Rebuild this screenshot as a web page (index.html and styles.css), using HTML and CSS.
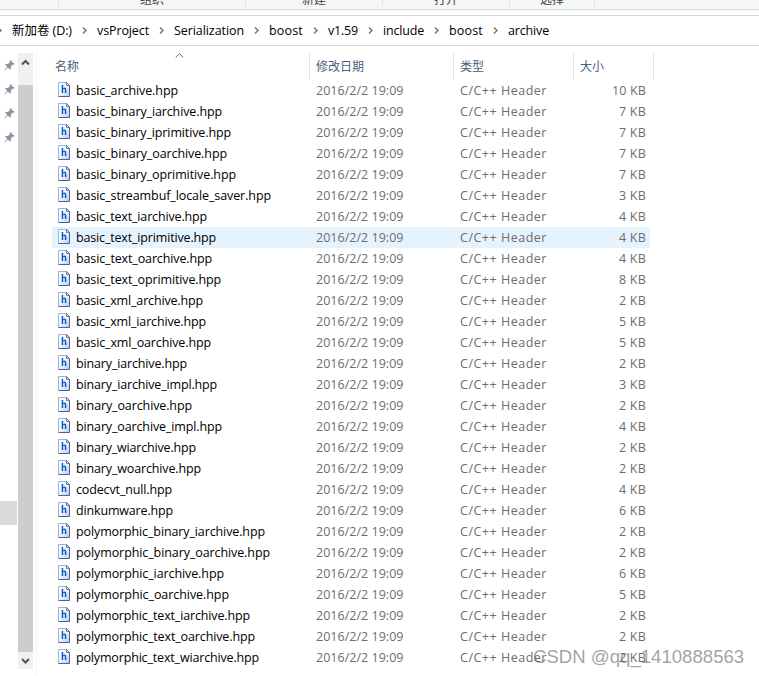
FILE: index.html
```html
<!DOCTYPE html>
<html lang="zh-CN">
<head>
<meta charset="utf-8">
<title>archive</title>
<link rel="stylesheet" href="styles.css">
</head>
<body>
<svg class="defs" aria-hidden="true">
  <defs>
    <linearGradient id="paper" x1="0" y1="0" x2="1" y2="1"><stop offset="0" stop-color="#fff"/><stop offset=".5" stop-color="#f0f5fe"/><stop offset="1" stop-color="#b4c9ea"/></linearGradient>
  </defs>
  <symbol id="file" viewBox="0 0 12 15">
    <path d="M.5.5H8.5L11.5 3.5V14.5H.5Z" fill="url(#paper)"/>
    <path d="M.5 14.5V.5H8.5" fill="none" stroke="#9fb3d3"/>
    <path d="M8.5 .5L11.5 3.5V14.5H.5" fill="none" stroke="#4a6294"/>
    <path d="M8.5 .5V3.5H11.5Z" fill="#dbe6f5" stroke="#3c568a" stroke-width=".7"/>
    <path d="M3.7 3H5.2V6.2Q5.8 5.6 6.6 5.6Q8.3 5.6 8.3 7.5V11H6.8V7.8Q6.8 6.8 6.1 6.8Q5.2 6.8 5.2 8V11H3.7Z" fill="#0a58c0"/>
  </symbol>
  <symbol id="pin" viewBox="0 0 11 11">
    <path d="M6.3 0L10.5 3.9L9.7 4.7L8.8 4.6L7 6.6L6.8 9L6 9.8L3.8 7.5L.3 10.7L0 10.4L3 6.8L.9 4.6L1.8 3.9L4.2 3.8L6 2L5.7.8Z" fill="#8c99a4"/>
  </symbol>
</svg>
<header class="ribbon">
  <span class="group g1">组织</span><span class="group g2">新建</span><span class="group g3">打开</span><span class="group g4">选择</span>
</header>
<nav class="address" id="address"></nav>
<main class="explorer">
  <aside class="tree">
    <svg class="pin"><use href="#pin"/></svg>
    <svg class="pin"><use href="#pin"/></svg>
    <svg class="pin"><use href="#pin"/></svg>
    <svg class="pin"><use href="#pin"/></svg>
    <div class="current"></div>
  </aside>
  <div class="scrollbar">
    <svg class="up" viewBox="0 0 15 32"><path d="M4 11.5L7.5 8L11 11.5" fill="none" stroke="#505050" stroke-width="2"/></svg>
    <div class="thumb"></div>
    <svg class="down" viewBox="0 0 15 17"><path d="M4 7L7.5 10.5L11 7" fill="none" stroke="#505050" stroke-width="2"/></svg>
  </div>
  <section class="files">
    <div class="head">
      <span class="h-name">名称<svg class="sort" viewBox="0 0 9 5"><path d="M.7 4.5L4.5.8L8.3 4.5" fill="none" stroke="#666"/></svg></span>
      <span class="h-date">修改日期</span><span class="h-type">类型</span><span class="h-size">大小</span>
    </div>
    <div id="rows"></div>
  </section>
</main>
<div class="watermark">CSDN @qq_1410888563</div>
<script src="script.js"></script>
</body>
</html>
```
FILE: styles.css
```css
* { box-sizing: border-box; }
body {
  margin: 0;
  width: 759px;
  height: 676px;
  overflow: hidden;
  position: relative;
  background: #fff;
  color: #000;
  font: 12.5px/21px "Open Sans", "Noto Sans CJK SC", sans-serif;
}
.defs { position: absolute; width: 0; height: 0; }
svg { display: block; }
.ribbon {
  display: flex;
  height: 10px;
  overflow: hidden;
  background: #f5f6f7;
  border-bottom: 1px solid #d9dadb;
  font-size: 12px;
}
.group {
  height: 6px;
  line-height: 0;
  border-right: 1px solid #e0e1e2;
  color: #444;
  text-align: center;
}
.g1 { width: 188px; margin-left: 58px; border-left: 1px solid #e0e1e2; }
.g2 { width: 137px; }
.g3 { width: 127px; }
.g4 { width: 85px; }
.address {
  display: flex;
  align-items: center;
  height: 31px;
  margin-top: 5px;
  border-top: 1px solid #d9d9d9;
  border-bottom: 1px solid #d9d9d9;
  white-space: nowrap;
}
.crumb { flex: none; }
.chev { flex: none; width: 5px; height: 7px; }
.explorer { display: flex; height: 630px; padding-top: 7px; }
.tree { width: 18px; }
.pin { width: 11px; height: 11px; margin: 7px 0 13px 4px; }
.pin + .pin { margin-top: 0; }
.current { width: 17px; height: 24px; margin-top: 358px; background: #d9d9d9; }
.scrollbar { width: 15px; height: 616px; background: #f0f0f0; }
.up { width: 15px; height: 32px; }
.thumb { height: 567px; background: #cdcdcd; }
.down { width: 15px; height: 17px; }
.files { width: 620px; margin-left: 3px; border-left: 1px solid #f5f5f5; }
.head { display: flex; height: 27px; line-height: 27px; color: #4c607a; font-size: 12px; }
.head span { border-right: 1px solid #e5e5e5; padding-left: 6px; }
.head .h-name { position: relative; width: 273px; padding-left: 18px; }
.h-date { width: 144px; }
.head .h-type { width: 120px; }
.h-size { width: 80px; }
.sort { position: absolute; left: 138px; top: 0; width: 9px; height: 5px; }
.row { display: flex; align-items: center; width: 598px; height: 21px; margin-left: 15px; padding-left: 6px; white-space: nowrap; }
.row.hover { background: #e5f3ff; }
.icon { width: 12px; height: 15px; margin: 0 6px 2px 0; }
.name { width: 240px; }
.date, .type, .size { color: #6d6d6d; }
.date { width: 144px; }
.type { width: 120px; }
.size { width: 66px; text-align: right; }
.watermark {
  position: absolute;
  left: 533px;
  top: 646px;
  font: 18.6px/22px "Liberation Sans", sans-serif;
  color: rgba(110, 110, 110, .65);
  white-space: nowrap;
}
```
FILE: script.js
```js
const files = [
  ["basic_archive.hpp", 10, 102], ["basic_binary_iarchive.hpp", 7, 146], ["basic_binary_iprimitive.hpp", 7, 155],
  ["basic_binary_oarchive.hpp", 7, 151], ["basic_binary_oprimitive.hpp", 7, 160], ["basic_streambuf_locale_saver.hpp", 3, 195],
  ["basic_text_iarchive.hpp", 4, 131], ["basic_text_iprimitive.hpp", 4, 140], ["basic_text_oarchive.hpp", 4, 136],
  ["basic_text_oprimitive.hpp", 8, 145], ["basic_xml_archive.hpp", 2, 127], ["basic_xml_iarchive.hpp", 5, 130],
  ["basic_xml_oarchive.hpp", 5, 135], ["binary_iarchive.hpp", 2, 111], ["binary_iarchive_impl.hpp", 3, 141],
  ["binary_oarchive.hpp", 2, 116], ["binary_oarchive_impl.hpp", 4, 146], ["binary_wiarchive.hpp", 2, 120],
  ["binary_woarchive.hpp", 2, 125], ["codecvt_null.hpp", 4, 96], ["dinkumware.hpp", 6, 97],
  ["polymorphic_binary_iarchive.hpp", 2, 189], ["polymorphic_binary_oarchive.hpp", 2, 194], ["polymorphic_iarchive.hpp", 6, 148],
  ["polymorphic_oarchive.hpp", 5, 153], ["polymorphic_text_iarchive.hpp", 2, 174], ["polymorphic_text_oarchive.hpp", 2, 179],
  ["polymorphic_text_wiarchive.hpp", 2, 183]
];
const crumbs = [
  ["新加卷 (D:)", 12, 60], ["vsProject", 97, 52], ["Serialization", 174, 70], ["boost", 269, 34],
  ["v1.59", 328, 30], ["include", 383, 41], ["boost", 449, 34], ["archive", 508, 41]
];

function fit(el, width) {
  const span = el.firstElementChild;
  const natural = span.getBoundingClientRect().width;
  span.style.letterSpacing = (width - natural) / span.textContent.length + "px";
}

const rows = document.getElementById("rows");
files.forEach(([name, kb, width], i) => {
  const row = document.createElement("div");
  row.className = "row" + (i === 7 ? " hover" : "");
  row.innerHTML = `<svg class="icon"><use href="#file"/></svg><div class="name"><span>${name}</span></div>
    <div class="date"><span>2016/2/2 19:09</span></div><div class="type"><span>C/C++ Header</span></div>
    <div class="size"><span>${kb} KB</span></div>`;
  rows.append(row);
  fit(row.querySelector(".name"), width);
  fit(row.querySelector(".date"), 87.5);
  fit(row.querySelector(".type"), 87);
  fit(row.querySelector(".size"), kb > 9 ? 34 : 27);
});

const address = document.getElementById("address");
let end = 0;
const chevron = '<svg class="chev" viewBox="0 0 5 7"><path d="M1 .5L4 3.5L1 6.5" fill="none" stroke="#777" stroke-width="1.5"/></svg>';
crumbs.forEach(([label, x, width], i) => {
  const gap = i ? x - end : x + 3;
  const sep = document.createElement("div");
  sep.style.width = gap + "px";
  sep.style.paddingLeft = (i ? gap / 2 - 2.5 : 0) + "px";
  sep.className = "crumb";
  sep.innerHTML = chevron;
  if (!i) sep.style.marginLeft = "-3px";
  const item = document.createElement("div");
  item.className = "crumb";
  item.innerHTML = `<span>${label}</span>`;
  address.append(sep, item);
  fit(item, width);
  item.style.width = width + "px";
  end = x + width;
});
```
